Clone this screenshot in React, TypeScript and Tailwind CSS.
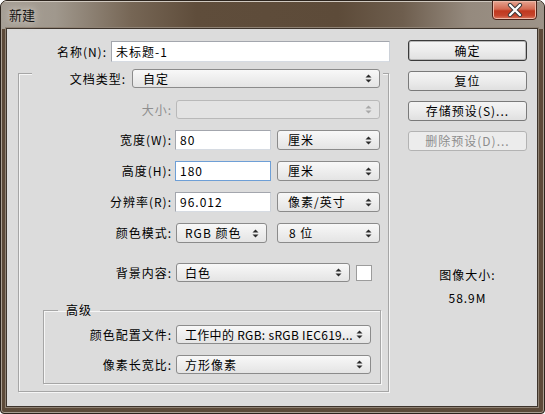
import React from "react";

function Arrow({ disabled }: { disabled?: boolean }) {
  const c = disabled ? "#a8a8a8" : "#2a2a2a";
  return (
    <svg width="7" height="9" viewBox="0 0 7 9" className="shrink-0">
      <polygon points="0.5,3.6 3.5,0.6 6.5,3.6" fill={c} />
      <polygon points="0.5,5.4 3.5,8.4 6.5,5.4" fill={c} />
    </svg>
  );
}

function Select({
  text,
  w,
  h = "h-[19px]",
  disabled,
  pl = "pl-[10px]",
  tight,
}: {
  text?: string;
  w: string;
  h?: string;
  disabled?: boolean;
  pl?: string;
  tight?: boolean;
}) {
  return (
    <div
      className={`${w} ${h} ${pl} shrink-0 flex items-center justify-between pr-[7px] rounded-[3px] border ${
        disabled
          ? "border-[#b9b9b9] bg-[#e3e3e3]"
          : "border-[#8b8b8b] bg-[linear-gradient(180deg,#f8f8f8_0%,#eeeeee_50%,#e4e4e4_100%)]"
      }`}
    >
      <span className={`whitespace-nowrap leading-[16px] text-black ${tight ? "tracking-[0.3px]" : ""}`}>{text}</span>
      <Arrow disabled={disabled} />
    </div>
  );
}

function Input({ text, w, h = "h-[20px]", focus }: { text: string; w: string; h?: string; focus?: boolean }) {
  return (
    <div
      className={`${w} ${h} shrink-0 flex items-center pl-[4px] bg-white border ${
        focus ? "border-[#6e9fd6]" : "border-[#a3a6ad] border-b-[#d6dbe2] border-r-[#ccd1d8]"
      }`}
    >
      <span className="leading-[16px] text-black whitespace-nowrap">{text}</span>
    </div>
  );
}

function Btn({ text, primary, disabled, h = "h-[20px]", mt = "" }: { text: string; primary?: boolean; disabled?: boolean; h?: string; mt?: string }) {
  return (
    <div
      className={`${h} ${mt} w-[119px] flex items-center justify-center rounded-[3px] border ${
        disabled
          ? "border-[#b3b3b3] bg-[#ececec] text-[#8c8c8c]"
          : primary
          ? "border-[#3a3a3a] shadow-[inset_0_0_0_1px_#b8b8b8] bg-[linear-gradient(180deg,#f4f4f4_0%,#ececec_50%,#e0e0e0_100%)] text-black"
          : "border-[#7a7a7a] bg-[linear-gradient(180deg,#f4f4f4_0%,#ececec_50%,#e0e0e0_100%)] text-black"
      }`}
    >
      <span className="leading-[16px] whitespace-nowrap">{text}</span>
    </div>
  );
}

export default function App() {
  return (
    <div className="w-[545px] h-[414px] relative overflow-hidden rounded-t-[7px] rounded-b-[4px] bg-[#5c4a39] border border-[#2c241d] shadow-[inset_0_0_0_1px_#a99e92] font-['Noto_Sans_CJK_SC',sans-serif] text-[12px] tracking-[1px] text-black">
      {/* title bar */}
      <div className="h-[28px] flex items-center bg-[linear-gradient(90deg,#a59e95_0%,#a0988d_10%,#766655_24%,#5f4d3b_36%,#5d4b39_62%,#6e5e4e_74%,#958a7e_86%,#9d9388_100%)] shadow-[inset_0_1px_0_#cfc8bf]">
        <span className="ml-[8px] text-[13px] leading-[16px] text-[#151515] tracking-[0px] [text-shadow:0_0_6px_#d8d2ca,0_0_12px_#cfc8bf]">新建</span>
        <div className="ml-auto mr-[7px] self-start w-[45px] h-[20px] -mt-px flex items-center justify-center rounded-b-[4px] border border-[#4a2219] bg-[linear-gradient(180deg,#e6a490_0%,#d46a52_45%,#c0381f_55%,#c5442c_80%,#dc7a62_100%)] shadow-[inset_0_0_0_1px_#efb9a8]">
          <svg width="16" height="14" viewBox="0 0 16 14">
            <path d="M3 2 L13 12 M13 2 L3 12" stroke="#3a3a3a" strokeWidth="4.2" strokeLinecap="round" />
            <path d="M3 2 L13 12 M13 2 L3 12" stroke="#ffffff" strokeWidth="2.3" strokeLinecap="round" />
          </svg>
        </div>
      </div>

      {/* client area */}
      <div className="ml-[6px] w-[530px] h-[377px] bg-[#dcdcdc] shadow-[0_0_0_1px_#3d342c,0_0_0_2px_#8f8274] flex">
        {/* left column */}
        <div className="w-[383px] flex flex-col">
          {/* name row */}
          <div className="mt-[12px] h-[21px] flex items-center">
            <span className="w-[100px] text-right leading-[16px] whitespace-nowrap">名称(N):</span>
            <Input text="未标题-1" w="w-[279px] ml-[4px]" h="h-[21px]" />
          </div>

          {/* outer group */}
          <div className="mt-[11px] ml-[11px] w-[371px] h-[319px] border border-[#a6a6a6] shadow-[inset_1px_1px_0_#f6f6f6,1px_1px_0_#f6f6f6] flex flex-col">
            <div className="-mt-[5px] ml-[13px] w-[351px] h-[19px] bg-[#dcdcdc] flex items-center">
              <span className="w-[94px] text-right leading-[16px] whitespace-nowrap">文档类型:</span>
              <div className="ml-[6px]">
                <Select text="自定" w="w-[248px]" />
              </div>
            </div>

            <div className="mt-[12px] h-[19px] flex items-center">
              <span className="w-[153px] text-right leading-[16px] text-[#8e8e8e] whitespace-nowrap">大小:</span>
              <div className="ml-[4px]">
                <Select w="w-[204px]" disabled />
              </div>
            </div>

            <div className="mt-[11px] h-[20px] flex items-center">
              <span className="w-[153px] text-right leading-[16px] whitespace-nowrap">宽度(W):</span>
              <div className="ml-[3px]">
                <Input text="80" w="w-[96px]" />
              </div>
              <div className="ml-[6px]">
                <Select text="厘米" w="w-[103px]" h="h-[20px]" />
              </div>
            </div>

            <div className="mt-[11px] h-[20px] flex items-center">
              <span className="w-[153px] text-right leading-[16px] whitespace-nowrap">高度(H):</span>
              <div className="ml-[3px]">
                <Input text="180" w="w-[96px]" focus />
              </div>
              <div className="ml-[6px]">
                <Select text="厘米" w="w-[103px]" h="h-[20px]" />
              </div>
            </div>

            <div className="mt-[11px] h-[20px] flex items-center">
              <span className="w-[153px] text-right leading-[16px] whitespace-nowrap">分辨率(R):</span>
              <div className="ml-[3px]">
                <Input text="96.012" w="w-[96px]" />
              </div>
              <div className="ml-[6px]">
                <Select text="像素/英寸" w="w-[103px]" h="h-[20px]" />
              </div>
            </div>

            <div className="mt-[11px] h-[20px] flex items-center">
              <span className="w-[153px] text-right leading-[16px] whitespace-nowrap">颜色模式:</span>
              <div className="ml-[4px]">
                <Select text="RGB 颜色" w="w-[91px]" h="h-[20px]" pl="pl-[8px]" />
              </div>
              <div className="ml-[10px]">
                <Select text="8 位" w="w-[103px]" h="h-[20px]" pl="pl-[11px]" />
              </div>
            </div>

            <div className="mt-[20px] h-[19px] flex items-center">
              <span className="w-[153px] text-right leading-[16px] whitespace-nowrap">背景内容:</span>
              <div className="ml-[4px]">
                <Select text="白色" w="w-[174px]" pl="pl-[8px]" />
              </div>
              <div className="ml-[6px] w-[16px] h-[16px] bg-white border border-[#9c9c9c]" />
            </div>

            {/* inner group */}
            <fieldset className="mt-[20px] ml-[24px] w-[338px] h-[82px] border border-[#a6a6a6] shadow-[inset_1px_1px_0_#f6f6f6,1px_1px_0_#f6f6f6] flex flex-col">
              <legend className="ml-[14px] px-[8px] leading-[16px]">高级</legend>
              <div className="mt-[7px] h-[19px] flex items-center">
                <span className="w-[128px] text-right leading-[16px] whitespace-nowrap">颜色配置文件:</span>
                <div className="ml-[4px]">
                  <Select text="工作中的 RGB: sRGB IEC619..." w="w-[195px]" pl="pl-[8px]" tight />
                </div>
              </div>
              <div className="mt-[11px] h-[19px] flex items-center">
                <span className="w-[128px] text-right leading-[16px] whitespace-nowrap">像素长宽比:</span>
                <div className="ml-[4px]">
                  <Select text="方形像素" w="w-[195px]" pl="pl-[8px]" />
                </div>
              </div>
            </fieldset>
          </div>
        </div>

        {/* right column */}
        <div className="ml-[18px] w-[119px] flex flex-col">
          <Btn text="确定" primary h="h-[21px]" mt="mt-[11px]" />
          <Btn text="复位" mt="mt-[10px]" />
          <Btn text="存储预设(S)..." mt="mt-[10px]" />
          <Btn text="删除预设(D)..." disabled mt="mt-[10px]" />
          <div className="mt-[116px] leading-[16px] text-center">图像大小:</div>
          <div className="mt-[7px] leading-[16px] text-center">58.9M</div>
        </div>
      </div>
    </div>
  );
}
